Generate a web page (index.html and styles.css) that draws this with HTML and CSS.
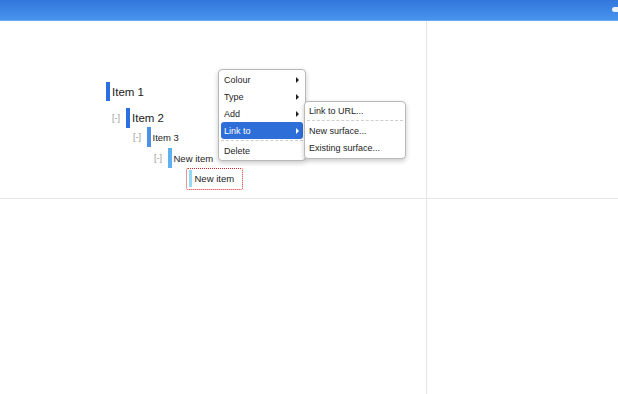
FILE: index.html
```html
<!DOCTYPE html>
<html>
<head>
<meta charset="utf-8">
<link rel="stylesheet" href="styles.css">
</head>
<body>
<header class="topbar"><span class="corner-icon"></span></header>
<main class="surface">
  <div class="pane pane-tl"></div>
  <div class="pane pane-tr"></div>
  <div class="pane pane-bl"></div>
  <div class="pane pane-br"></div>

  <div class="tree">
    <div class="row row-1">
      <span class="bar bar-dark bar-wide"></span><span class="label label-big">Item 1</span>
    </div>
    <div class="row row-2">
      <span class="toggle">[-]</span><span class="bar bar-dark bar-wide"></span><span class="label label-big">Item 2</span>
    </div>
    <div class="row row-3">
      <span class="toggle">[-]</span><span class="bar bar-mid"></span><span class="label">Item 3</span>
    </div>
    <div class="row row-4">
      <span class="toggle">[-]</span><span class="bar bar-light"></span><span class="label">New item</span>
    </div>
    <div class="row row-5">
      <div class="editing"><span class="bar bar-pale"></span><span class="label">New item</span></div>
    </div>
  </div>

  <div class="menu main-menu">
    <div class="menu-item">Colour<span class="arrow"></span></div>
    <div class="menu-item">Type<span class="arrow"></span></div>
    <div class="menu-item">Add<span class="arrow"></span></div>
    <div class="menu-item active">Link to<span class="arrow"></span></div>
    <div class="menu-sep"></div>
    <div class="menu-item">Delete</div>
  </div>

  <div class="menu sub-menu">
    <div class="menu-item">Link to URL...</div>
    <div class="menu-sep"></div>
    <div class="menu-item">New surface...</div>
    <div class="menu-item">Existing surface...</div>
  </div>
</main>
</body>
</html>
```

FILE: styles.css
```css
html, body {
  margin: 0;
  padding: 0;
  background: #ffffff;
  font-family: "Liberation Sans", Arial, sans-serif;
  color: #1c1c1c;
  overflow: hidden;
}

.topbar {
  position: relative;
  height: 20px;
  background: linear-gradient(#3276dc, #4894ed);
  border-bottom: 1px solid #6ba9f1;
  overflow: hidden;
}

.corner-icon {
  position: absolute;
  right: -4px;
  top: 7px;
  width: 10px;
  height: 5px;
  border-radius: 3px;
  background: #eaf3fd;
}

.surface {
  position: relative;
  height: 373px;
  display: grid;
  grid-template-columns: 427px 1fr;
  grid-template-rows: 178px 1fr;
}

.pane-tl, .pane-bl {
  border-right: 1px solid #e6e6e6;
}
.pane-tl, .pane-tr {
  border-bottom: 1px solid #e6e6e6;
}

/* tree on the free canvas */
.tree {
  position: absolute;
  left: 106px;
  top: 61px;
  display: flex;
  flex-direction: column;
}

.row {
  display: flex;
  align-items: center;
  height: 20px;
}
.row-1 { height: 19px; }
.row-2 { margin-top: 7px; padding-left: 6px; }
.row-3 { margin-top: -1px; padding-left: 27px; }
.row-4 { margin-top: 1px; padding-left: 48px; }
.row-5 { margin-top: 0; padding-left: 80px; height: 22px; }

.toggle {
  width: 14px;
  font-size: 9px;
  color: #9a9a9a;
}

.bar {
  align-self: stretch;
  width: 3.5px;
  margin-right: 2px;
}
.bar-wide { width: 4px; }
.bar-dark { background: #2b6fe0; }
.bar-mid { background: #4b91e6; }
.bar-light { background: #5db1f1; }
.bar-pale { background: #93d9f4; width: 3px; }

.label {
  font-size: 9.5px;
  white-space: nowrap;
}
.label-big { font-size: 11.5px; }

.editing {
  display: flex;
  align-items: center;
  height: 100%;
  box-sizing: border-box;
  padding: 1px 8px 2px 2px;
  border: 1px dotted #d82a2a;
  border-radius: 2px;
}
.editing .label { margin-left: 0.5px; }

/* context menus overlay the canvas */
.menu {
  position: absolute;
  background: #ffffff;
  border: 1px solid #b9b9b9;
  border-radius: 4px;
  box-shadow: 0 2px 5px rgba(0, 0, 0, 0.22);
  box-sizing: border-box;
}

.main-menu {
  left: 218px;
  top: 48px;
  width: 88px;
  padding: 1px 0;
}

.sub-menu {
  left: 304px;
  top: 80px;
  width: 102px;
  padding: 0 0 2px;
}

.menu-item {
  display: flex;
  align-items: center;
  height: 17px;
  margin: 0 2px;
  padding-left: 3px;
  font-size: 9px;
  color: #1e1e1e;
  border-radius: 3px;
  white-space: nowrap;
}
.sub-menu .menu-item { padding-left: 2px; }

.menu-item.active {
  background: #2d6ed9;
  color: #ffffff;
}

.arrow {
  margin-left: auto;
  margin-right: 4px;
  width: 0;
  height: 0;
  border-left: 3px solid #1e1e1e;
  border-top: 3px solid transparent;
  border-bottom: 3px solid transparent;
}
.active .arrow { border-left-color: #ffffff; }

.menu-sep {
  margin: 1px 2px;
  border-top: 1px dashed #cfcfcf;
}
```
